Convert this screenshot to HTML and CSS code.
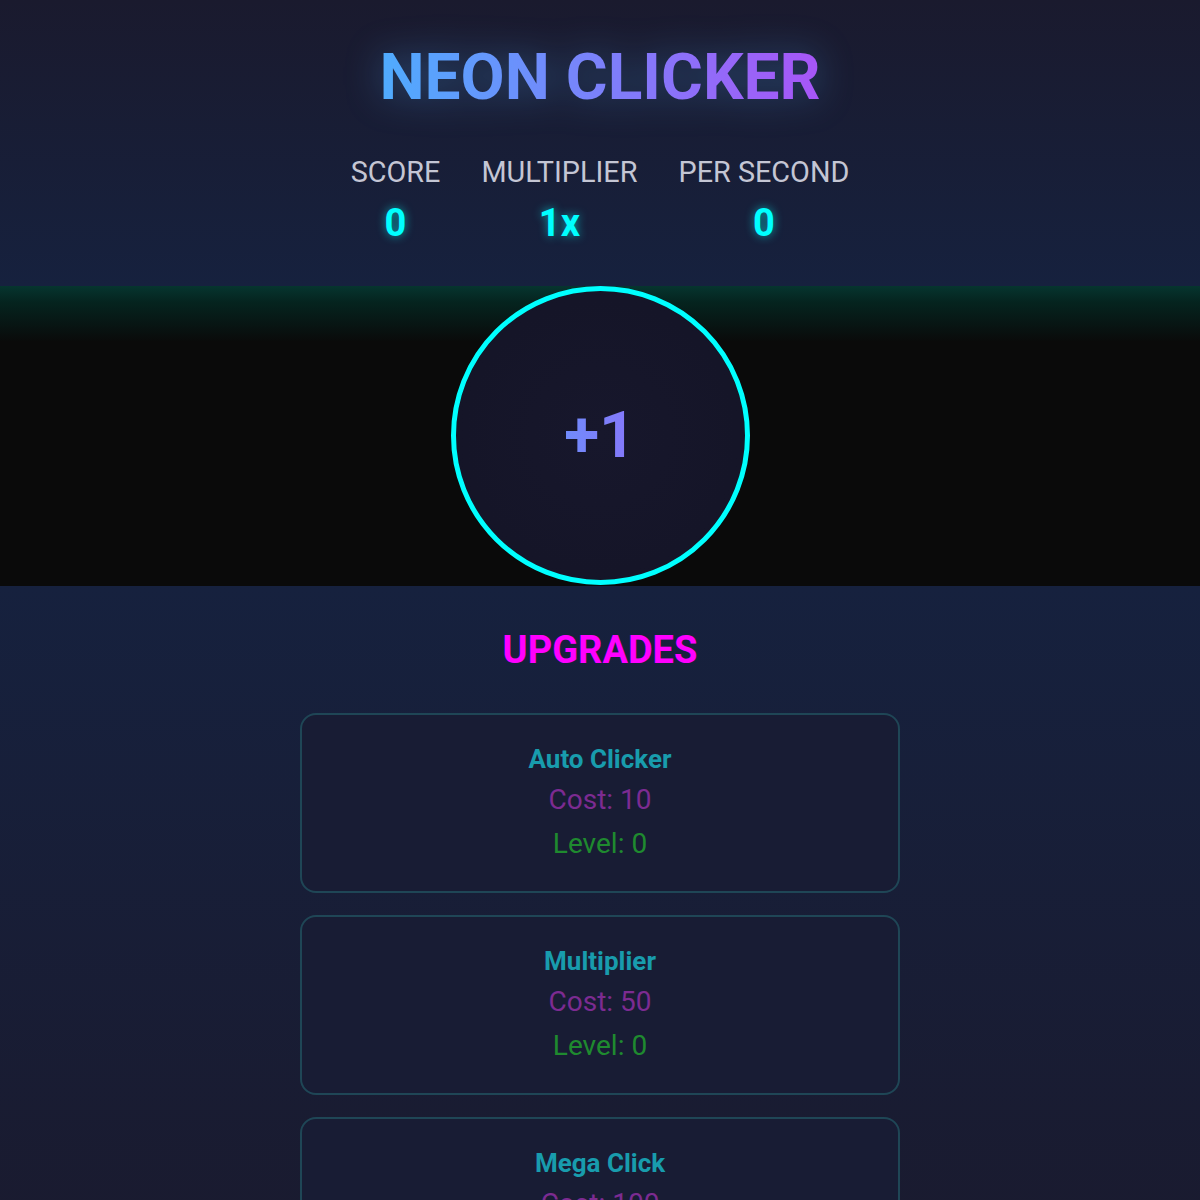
FILE: index.html
```html
<!DOCTYPE html>
<html lang="en">
<head>
  <meta charset="UTF-8" />
  <meta name="viewport" content="width=device-width, initial-scale=1.0"/>
  <title>Neon Clicker</title>
  <link rel="stylesheet" href="styles.css">
</head>
<body>
  <header class="top">
    <h1 class="title">NEON CLICKER</h1>
    <div class="stats">
      <div class="stat">
        <div class="stat-label">SCORE</div>
        <div class="stat-value" id="score">0</div>
      </div>
      <div class="stat">
        <div class="stat-label">MULTIPLIER</div>
        <div class="stat-value" id="multiplier">1x</div>
      </div>
      <div class="stat">
        <div class="stat-label">PER SECOND</div>
        <div class="stat-value" id="perSecond">0</div>
      </div>
    </div>
  </header>

  <section class="arena">
    <button class="click-btn" id="clickBtn"><span>+1</span></button>
  </section>

  <section class="upgrades">
    <h2>UPGRADES</h2>
    <div class="upgrade-list">
      <div class="upgrade">
        <h3>Auto Clicker</h3>
        <p class="cost">Cost: 10</p>
        <p class="level">Level: 0</p>
      </div>
      <div class="upgrade">
        <h3>Multiplier</h3>
        <p class="cost">Cost: 50</p>
        <p class="level">Level: 0</p>
      </div>
      <div class="upgrade">
        <h3>Mega Click</h3>
        <p class="cost">Cost: 100</p>
        <p class="level">Level: 0</p>
      </div>
    </div>
  </section>
</body>
</html>
```

FILE: styles.css
```css
* {
  box-sizing: border-box;
}
body {
  margin: 0;
  font-family: Roboto, 'Liberation Sans', sans-serif;
  background: #1a1a2e;
  color: #fff;
}
.top {
  padding: 40px 20px 39px;
  text-align: center;
  background: linear-gradient(to bottom, #1a1a2e, #16213e);
}
.title {
  display: inline-block;
  margin: 0;
  font-size: 64px;
  font-weight: 700;
  line-height: 1.2;
  background: linear-gradient(to right, #4facfe, #a855f7);
  -webkit-background-clip: text;
  background-clip: text;
  color: transparent;
  filter: drop-shadow(0 0 18px rgba(79, 172, 254, 0.35));
}
.stats {
  display: flex;
  justify-content: center;
  gap: 41px;
  margin-top: 38px;
}
.stat-label {
  font-size: 28.8px;
  line-height: 1.2;
  color: #c4c6d4;
}
.stat-value {
  margin-top: 12px;
  font-size: 38px;
  font-weight: 700;
  line-height: 1.2;
  color: #00ffff;
  text-shadow: 0 0 10px rgba(0, 255, 255, 0.6);
}
.arena {
  height: 300px;
  display: flex;
  justify-content: center;
  align-items: center;
  background: linear-gradient(to bottom, #06352f 0, #05241f 16px, #0a0a0a 56px);
}
.click-btn {
  width: 299px;
  height: 299px;
  border-radius: 50%;
  border: 5px solid #00ffff;
  background: radial-gradient(circle, #17172c, #141426);
  background-clip: padding-box;
  cursor: pointer;
  font-family: inherit;
  font-size: 64px;
  font-weight: 700;
  padding: 0;
}
.click-btn span {
  display: block;
  width: 100%;
  background: linear-gradient(to right, #4facfe, #a855f7);
  -webkit-background-clip: text;
  background-clip: text;
  color: transparent;
}
.upgrades {
  padding: 42px 20px 40px;
  text-align: center;
  background: linear-gradient(to bottom, #16213e, #1a1a2e 700px);
}
.upgrades h2 {
  margin: 0 0 39px;
  font-size: 38px;
  font-weight: 700;
  line-height: 1.2;
  color: #ff00ff;
}
.upgrade-list {
  display: flex;
  flex-direction: column;
  align-items: center;
  gap: 22px;
}
.upgrade {
  width: 600px;
  padding: 25px 20px;
  border: 2px solid #1f4656;
  border-radius: 16px;
  background: #181c34;
}
.upgrade h3 {
  margin: 0;
  font-size: 26px;
  font-weight: 700;
  line-height: 38px;
  color: #189cad;
}
.upgrade p {
  margin: 0;
  font-size: 28px;
  line-height: 44px;
}
.upgrade .cost {
  color: #7c2b91;
}
.upgrade .level {
  color: #1f8a2f;
}
```
